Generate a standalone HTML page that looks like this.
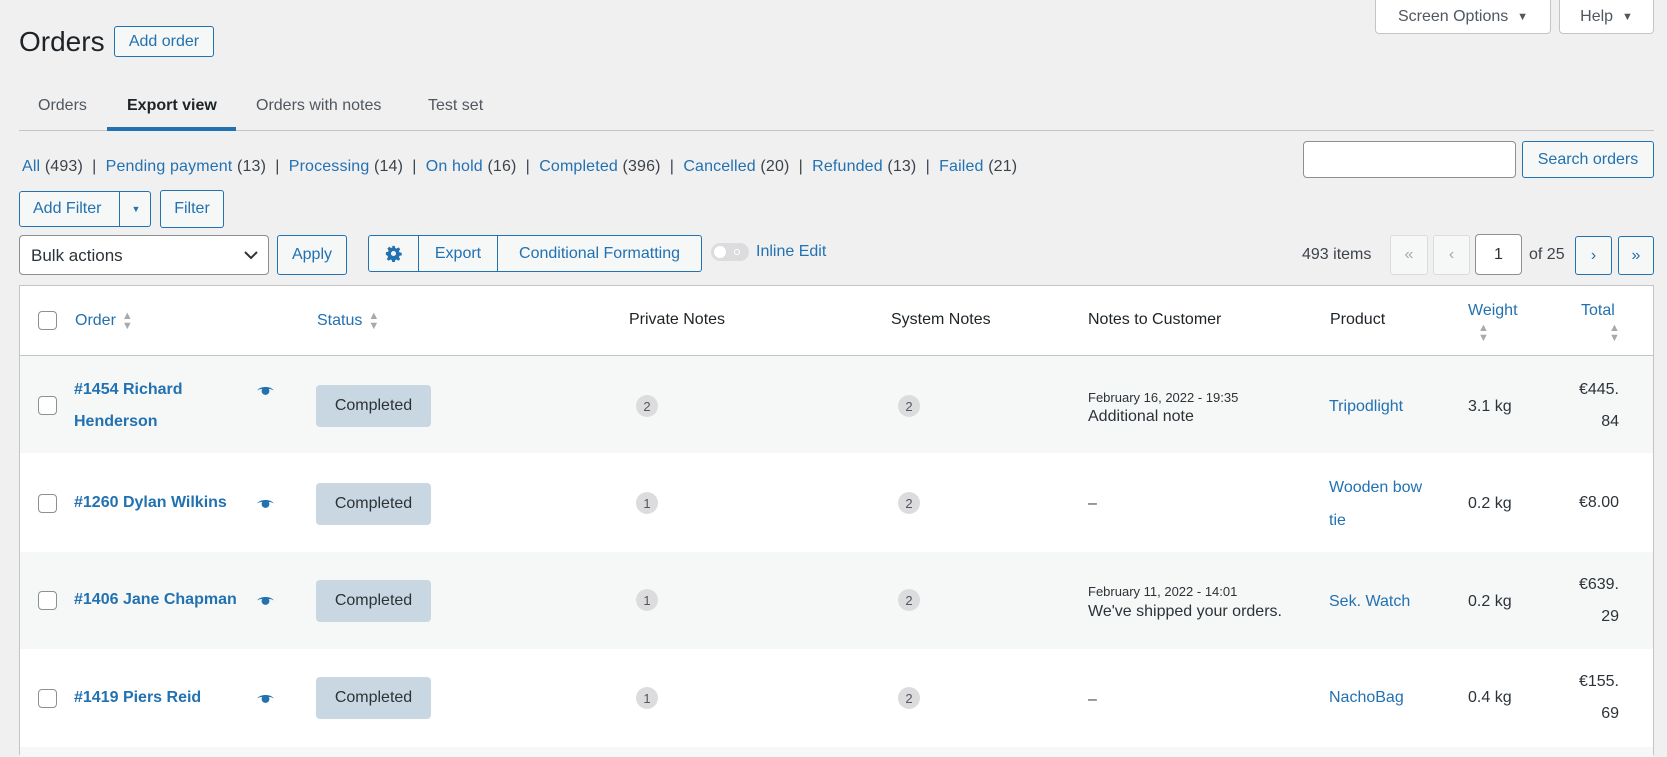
<!DOCTYPE html>
<html><head><meta charset="utf-8"><style>
*{box-sizing:border-box;margin:0;padding:0}
body{width:1667px;height:754px;overflow:hidden;background:#f0f0f1;font-family:"Liberation Sans",sans-serif;font-size:16px;color:#3c434a;position:relative}
.a{position:absolute;white-space:nowrap}
.b{color:#2271b1}
.btn{position:absolute;border:1px solid #2271b1;border-radius:3px;background:#f6f7f7;color:#2271b1;display:flex;align-items:center;justify-content:center;font-size:16px}
.wbtn{position:absolute;border:1px solid #c3c4c7;border-radius:0 0 4px 4px;background:#fff;color:#50575e;display:flex;align-items:center;justify-content:center;font-size:16px;border-top:none}
.cb{position:absolute;width:19px;height:19px;border:1px solid #8c8f94;border-radius:4px;background:#fff}
.row{position:absolute;left:20px;width:1633px;height:97px}
.badge{position:absolute;left:316px;width:115px;height:42px;background:#c8d7e1;border-radius:4px;color:#2c3338;display:flex;align-items:center;justify-content:center;font-size:16px}
.num{position:absolute;width:22px;height:22px;border-radius:50%;background:#dcdcde;font-size:13px;display:flex;align-items:center;justify-content:center;color:#50575e}
.eye{position:absolute;left:256px}
.sort{display:inline-block;vertical-align:middle;margin-left:6px;font-size:11px;line-height:10px;color:#a7aaad}
.ord{font-weight:bold;color:#2271b1;line-height:32px}
.tot{position:absolute;right:48px;text-align:right;line-height:32px;color:#2c3338;white-space:nowrap}
</style></head><body>
<svg width="0" height="0" style="position:absolute"><defs><symbol id="eye" viewBox="0 0 20 14"><path d="M1 7C4 2 16 2 19 7C16 4.5 4 4.5 1 7Z" fill="#2271b1"/><circle cx="10" cy="7.5" r="4.2" fill="#2271b1"/></symbol></defs></svg>
<div class="wbtn" style="left:1375px;top:0;width:176px;height:34px">Screen Options&nbsp;&nbsp;<span style="font-size:11px">▼</span></div>
<div class="wbtn" style="left:1559px;top:0;width:95px;height:34px">Help&nbsp;&nbsp;<span style="font-size:11px">▼</span></div>
<div class="a" style="left:19px;top:26px;font-size:28px;color:#1d2327">Orders</div>
<div class="btn" style="left:114px;top:26px;width:100px;height:31px">Add order</div>
<div class="a" style="left:38px;top:97px;color:#50575e">Orders</div>
<div class="a" style="left:127px;top:97px;color:#1d2327;font-weight:bold">Export view</div>
<div class="a" style="left:256px;top:97px;color:#50575e">Orders with notes</div>
<div class="a" style="left:428px;top:97px;color:#50575e">Test set</div>
<div class="a" style="left:19px;top:130px;width:1635px;height:1px;background:#c3c4c7"></div>
<div class="a" style="left:107px;top:127px;width:129px;height:4px;background:#2271b1"></div>
<div class="a" style="left:22px;top:158px;letter-spacing:0.15px"><span class="b">All</span> (493) &nbsp;|&nbsp; <span class="b">Pending payment</span> (13) &nbsp;|&nbsp; <span class="b">Processing</span> (14) &nbsp;|&nbsp; <span class="b">On hold</span> (16) &nbsp;|&nbsp; <span class="b">Completed</span> (396) &nbsp;|&nbsp; <span class="b">Cancelled</span> (20) &nbsp;|&nbsp; <span class="b">Refunded</span> (13) &nbsp;|&nbsp; <span class="b">Failed</span> (21)</div>
<div class="a" style="left:1303px;top:141px;width:213px;height:37px;background:#fff;border:1px solid #8c8f94;border-radius:4px"></div>
<div class="btn" style="left:1522px;top:141px;width:132px;height:37px">Search orders</div>
<div class="btn" style="left:19px;top:191px;width:132px;height:36px;justify-content:flex-start;padding-left:13px">Add Filter<span style="position:absolute;left:99px;top:0;bottom:0;border-left:1px solid #2271b1;width:33px;display:flex;align-items:center;justify-content:center;font-size:9px">▼</span></div>
<div class="btn" style="left:160px;top:190px;width:64px;height:38px">Filter</div>
<div class="a" style="left:19px;top:235px;width:250px;height:40px;background:#fff;border:1px solid #8c8f94;border-radius:4px;padding:10px 11px;color:#2c3338;font-size:17px">Bulk actions<svg style="position:absolute;right:10px;top:14px" width="14" height="10" viewBox="0 0 14 10"><path d="M1 2l6 6 6-6" fill="none" stroke="#2c3338" stroke-width="2"/></svg></div>
<div class="btn" style="left:277px;top:235px;width:70px;height:40px">Apply</div>
<div class="btn" style="left:368px;top:235px;width:334px;height:37px;justify-content:flex-start">
<span style="width:49px;display:flex;align-items:center;justify-content:center"><svg width="17" height="17" viewBox="0 0 20 20"><path fill="#2271b1" d="M8.5 1h3l.5 2.6 1.6.7 2.2-1.5 2.1 2.1-1.5 2.2.7 1.6 2.6.5v3l-2.6.5-.7 1.6 1.5 2.2-2.1 2.1-2.2-1.5-1.6.7-.5 2.6h-3l-.5-2.6-1.6-.7-2.2 1.5-2.1-2.1 1.5-2.2-.7-1.6L1 11.5v-3l2.6-.5.7-1.6-1.5-2.2 2.1-2.1 2.2 1.5 1.6-.7zM10 7a3 3 0 100 6 3 3 0 000-6z"/></svg></span><span style="border-left:1px solid #2271b1;height:100%;width:79px;display:flex;align-items:center;justify-content:center">Export</span><span style="border-left:1px solid #2271b1;height:100%;flex:1;display:flex;align-items:center;justify-content:center">Conditional Formatting</span></div>
<div class="a" style="left:711px;top:243px;width:38px;height:18px;border-radius:9px;background:#dcdcde"><div style="position:absolute;left:3px;top:3px;width:12px;height:12px;border-radius:50%;background:#fff"></div><div style="position:absolute;left:23px;top:6px;width:6px;height:6px;border-radius:50%;border:1px solid #fff"></div></div>
<div class="a b" style="left:756px;top:243px">Inline Edit</div>
<div class="a" style="left:1302px;top:246px">493 items</div>
<div class="a" style="left:1390px;top:235px;width:38px;height:40px;border:1px solid #dcdcde;border-radius:3px;background:#f6f7f7;color:#a7aaad;text-align:center;line-height:38px">«</div>
<div class="a" style="left:1433px;top:235px;width:37px;height:40px;border:1px solid #dcdcde;border-radius:3px;background:#f6f7f7;color:#a7aaad;text-align:center;line-height:38px">‹</div>
<div class="a" style="left:1475px;top:234px;width:47px;height:41px;border:1px solid #8c8f94;border-radius:4px;background:#fff;text-align:center;line-height:39px;color:#2c3338">1</div>
<div class="a" style="left:1529px;top:246px">of 25</div>
<div class="btn" style="left:1575px;top:236px;width:37px;height:39px">›</div>
<div class="btn" style="left:1618px;top:236px;width:36px;height:39px">»</div>
<div class="a" style="left:19px;top:285px;width:1635px;height:470px;background:#fff;border:1px solid #c3c4c7"></div>
<div class="a" style="left:20px;top:355px;width:1633px;height:1px;background:#c3c4c7"></div>
<div class="cb" style="left:38px;top:311px"></div>
<div class="a b" style="left:75px;top:311px">Order<span class="sort">▲<br>▼</span></div>
<div class="a b" style="left:317px;top:311px">Status<span class="sort">▲<br>▼</span></div>
<div class="a" style="left:629px;top:311px;color:#1d2327">Private Notes</div>
<div class="a" style="left:891px;top:311px;color:#1d2327">System Notes</div>
<div class="a" style="left:1088px;top:311px;color:#1d2327">Notes to Customer</div>
<div class="a" style="left:1330px;top:311px;color:#1d2327">Product</div>
<div class="a b" style="left:1468px;top:302px">Weight<br><span class="sort" style="margin:3px 0 0 10px">▲<br>▼</span></div>
<div class="a b" style="left:1581px;top:302px">Total<br><span class="sort" style="margin:3px 0 0 28px">▲<br>▼</span></div>

<div class="row" style="top:356px;background:#f6f7f7"></div>
<div class="row" style="top:455px;background:#fff"></div>
<div class="row" style="top:552px;background:#f6f7f7"></div>
<div class="row" style="top:650px;background:#fff"></div>
<div class="row" style="top:747px;background:#f6f7f7;height:10px"></div>

<!-- row1 -->
<div class="cb" style="left:38px;top:396px"></div>
<div class="a ord" style="left:74px;top:374px">#1454 Richard<br>Henderson</div>
<svg class="eye" style="top:384px" width="19" height="13"><use href="#eye"/></svg>
<div class="badge" style="top:385px">Completed</div>
<div class="num" style="left:636px;top:395px">2</div>
<div class="num" style="left:898px;top:395px">2</div>
<div class="a" style="left:1088px;top:390px;font-size:13px;color:#2c3338">February 16, 2022 - 19:35</div>
<div class="a" style="left:1088px;top:408px;color:#2c3338">Additional note</div>
<div class="a b" style="left:1329px;top:398px">Tripodlight</div>
<div class="a" style="left:1468px;top:398px;color:#2c3338">3.1 kg</div>
<div class="tot" style="top:374px">€445.<br>84</div>
<!-- row2 -->
<div class="cb" style="left:38px;top:494px"></div>
<div class="a ord" style="left:74px;top:487px">#1260 Dylan Wilkins</div>
<svg class="eye" style="top:497px" width="19" height="13"><use href="#eye"/></svg>
<div class="badge" style="top:483px">Completed</div>
<div class="num" style="left:636px;top:492px">1</div>
<div class="num" style="left:898px;top:492px">2</div>
<div class="a" style="left:1088px;top:495px">–</div>
<div class="a b" style="left:1329px;top:471px;line-height:33px">Wooden bow<br>tie</div>
<div class="a" style="left:1468px;top:495px;color:#2c3338">0.2 kg</div>
<div class="tot" style="top:487px">€8.00</div>
<!-- row3 -->
<div class="cb" style="left:38px;top:591px"></div>
<div class="a ord" style="left:74px;top:584px">#1406 Jane Chapman</div>
<svg class="eye" style="top:594px" width="19" height="13"><use href="#eye"/></svg>
<div class="badge" style="top:580px">Completed</div>
<div class="num" style="left:636px;top:589px">1</div>
<div class="num" style="left:898px;top:589px">2</div>
<div class="a" style="left:1088px;top:584px;font-size:13px;color:#2c3338">February 11, 2022 - 14:01</div>
<div class="a" style="left:1088px;top:603px;color:#2c3338">We've shipped your orders.</div>
<div class="a b" style="left:1329px;top:593px">Sek. Watch</div>
<div class="a" style="left:1468px;top:593px;color:#2c3338">0.2 kg</div>
<div class="tot" style="top:569px">€639.<br>29</div>
<!-- row4 -->
<div class="cb" style="left:38px;top:689px"></div>
<div class="a ord" style="left:74px;top:682px">#1419 Piers Reid</div>
<svg class="eye" style="top:692px" width="19" height="13"><use href="#eye"/></svg>
<div class="badge" style="top:677px">Completed</div>
<div class="num" style="left:636px;top:687px">1</div>
<div class="num" style="left:898px;top:687px">2</div>
<div class="a" style="left:1088px;top:691px">–</div>
<div class="a b" style="left:1329px;top:689px">NachoBag</div>
<div class="a" style="left:1468px;top:689px;color:#2c3338">0.4 kg</div>
<div class="tot" style="top:666px">€155.<br>69</div>
</body></html>
